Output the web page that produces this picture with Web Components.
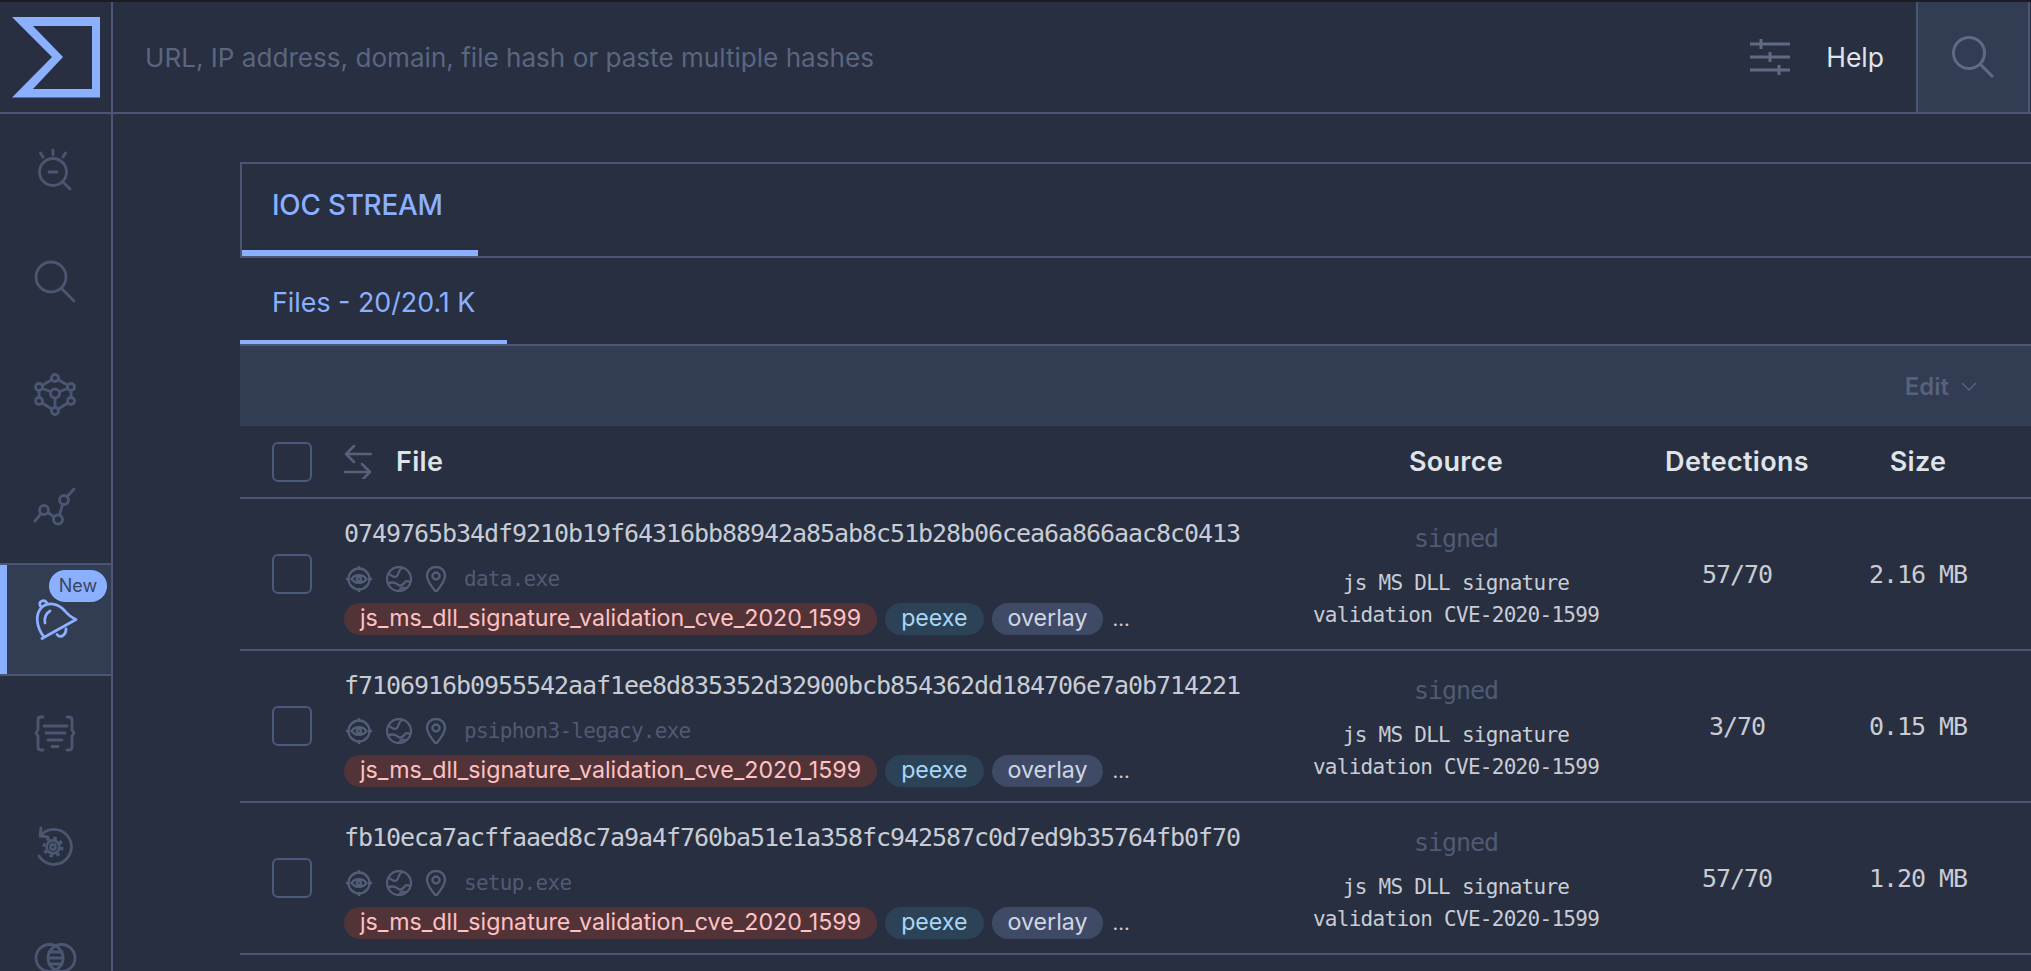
<!DOCTYPE html>
<html>
<head>
<meta charset="utf-8">
<title>IOC Stream</title>
<style>
  html, body { margin: 0; height: 100%; background: #282f40; overflow: hidden; }
  body { font-family: "Inter", "Liberation Sans", sans-serif; color: #dfe3ea; }
</style>
</head>
<body>
<vt-app>
  <vt-topbar slot="top"></vt-topbar>
  <vt-rail slot="rail">
    <rail-item icon="detect"></rail-item>
    <rail-item icon="search"></rail-item>
    <rail-item icon="graph"></rail-item>
    <rail-item icon="trend"></rail-item>
    <rail-item icon="bell" active badge="New"></rail-item>
    <rail-item icon="rules"></rail-item>
    <rail-item icon="retro"></rail-item>
    <rail-item icon="dna"></rail-item>
  </vt-rail>
  <ioc-panel>
    <file-row hash="0749765b34df9210b19f64316bb88942a85ab8c51b28b06cea6a866aac8c0413" name="data.exe" detections="57/70" size="2.16 MB"></file-row>
    <file-row hash="f7106916b0955542aaf1ee8d835352d32900bcb854362dd184706e7a0b714221" name="psiphon3-legacy.exe" detections="3/70" size="0.15 MB"></file-row>
    <file-row hash="fb10eca7acffaaed8c7a9a4f760ba51e1a358fc942587c0d7ed9b35764fb0f70" name="setup.exe" detections="57/70" size="1.20 MB"></file-row>
  </ioc-panel>
</vt-app>

<script>
// @ts-check
const ICONS = {
  detect: `<circle cx="28" cy="32" r="13.500"/><path d="M28 10v5M15.500 13l2.500 4M40.500 13l-2.500 4M24 32h8M38 42l7 7"/>`,
  search: `<circle cx="26" cy="24" r="15"/><path d="M37 36l12 12"/>`,
  graph: `<path d="M30 13l16 9v14l-16 10-16-10V22zM14 22l16 6.500 16-6.500M30 28.500V46"/><g fill="#282f40"><circle cx="30" cy="13" r="3.500"/><circle cx="46" cy="22" r="3.500"/><circle cx="46" cy="36" r="3.500"/><circle cx="30" cy="46" r="3.500"/><circle cx="14" cy="36" r="3.500"/><circle cx="14" cy="22" r="3.500"/><circle cx="30" cy="28.500" r="4.500"/></g>`,
  trend: `<path d="M10 43l9-11 14 9.500L39 22l10-11"/><g fill="#282f40"><circle cx="19" cy="32" r="4.500"/><circle cx="33" cy="41.500" r="4.500"/><circle cx="39" cy="22" r="4.500"/></g>`,
  bell: `<path d="M17 48.500L51 29.500M19 47C12 38 9 25 17 17 23 12 33 13 40 21 43 25 46 27 51 29.500M17 17c-3-1-3-5 0-6 3-1 5 1 5 3M32 44.500c3 4 9 1 9-5.500M25 21c-4 2-6 7-5 12"/>`,
  rules: `<path d="M18 14h-2q-3 0-3 3v10l-2 3 2 3v11q0 3 3 3h2M42 14h2q3 0 3 3v10l2 3-2 3v11q0 3-3 3h-2M19 23h23M21 30h19M23 37h14M27 43.500h6"/>`,
  retro: `<path d="M16 20A17.500 17.500 0 1 1 14 41M16 13l-1 8 8 1"/><circle cx="28" cy="32" r="2.500"/><circle cx="28" cy="32" r="6.500"/><circle cx="28" cy="32" r="9" stroke-width="3" stroke-dasharray="3.500 3.570" stroke-linecap="butt"/>`,
  dna: `<circle cx="24.500" cy="30" r="13.500"/><circle cx="36.500" cy="30" r="13.500"/><path d="M24 24h13M23 30h15M24 36h13"/>`,
};

const ROW_ICONS = {
  eye: `<circle cx="13" cy="13" r="10.500"/><path d="M13 0v3M13 23v3M0 13h3M23 13h3M5.500 13c3.500-5 11.500-5 15 0-3.500 5-11.500 5-15 0z"/><circle cx="13" cy="13" r="2"/>`,
  globe: `<circle cx="13" cy="13" r="12"/><path d="M3 8c3 1 5 5 8 2 2-2 1-6 5-8M2 17c5-1 7-1 9 1 3 3 6 1 8-2 1-1 3-1 5 0M14 24c0-2 2-3 6-2"/>`,
  pin: `<path d="M10 1C4 1 1 5.500 1 10c0 5 5 11 9 16 4-5 9-11 9-16 0-4.500-3-9-9-9z"/><circle cx="10" cy="10" r="3.500"/>`,
};

class VtApp extends HTMLElement {
  constructor() {
    super();
    this.attachShadow({ mode: 'open' }).innerHTML = `
      <style>
        :host { display: grid; grid-template-rows: 114px 1fr; grid-template-columns: 113px 1fr; height: 971px; width: 2031px; overflow: hidden; }
        ::slotted([slot="top"]) { grid-column: 1 / -1; }
        main { padding: 48px 0 0 127px; min-width: 0; overflow: hidden; }
      </style>
      <slot name="top"></slot>
      <slot name="rail"></slot>
      <main><slot></slot></main>`;
  }
}

class VtTopbar extends HTMLElement {
  constructor() {
    super();
    this.attachShadow({ mode: 'open' }).innerHTML = `
      <style>
        :host { display: flex; box-sizing: border-box; height: 114px; border-top: 2px solid #1c1d22; border-bottom: 2px solid #4a5673; align-items: stretch; padding-right: 1px; }
        .logo { width: 111px; flex: none; border-right: 2px solid #4a5673; }
        .logo svg { display: block; }
        .query { flex: 1; padding-left: 32px; align-self: center; font-size: 26.100px; color: #5a6680; }
        .filters { align-self: center; display: block; margin-right: 36px; }
        .help { align-self: center; font-size: 26.500px; color: #dfe3ea; margin-right: 32px; }
        .go { width: 110px; flex: none; background: #323c52; border-left: 2px solid #4a5673; border-right: 2px solid #4a5673; display: flex; align-items: center; justify-content: center; }
      </style>
      <div class="logo">
        <svg width="111" height="110" viewBox="0 2 111 110"><path fill="#8ab0ff" fill-rule="evenodd" d="M12 17H100V97.500H12L52 57zM33 26L63 57 33 89H92V26z"/></svg>
      </div>
      <div class="query">URL, IP address, domain, file hash or paste multiple hashes</div>
      <svg class="filters" width="40" height="36" viewBox="0 0 40 36" fill="none" stroke="#5f6b85" stroke-width="3"><path d="M0 5h40M0 18h40M0 31h40M11 0v10M20 13v10M29 26v10"/></svg>
      <div class="help">Help</div>
      <div class="go">
        <svg width="44" height="44" viewBox="0 0 44 44" fill="none" stroke="#5f6b85" stroke-width="3"><circle cx="18" cy="18" r="15.500"/><path d="M29 29l13 13"/></svg>
      </div>`;
  }
}

class VtRail extends HTMLElement {
  constructor() {
    super();
    this.attachShadow({ mode: 'open' }).innerHTML = `
      <style>
        :host { display: flex; flex-direction: column; width: 113px; box-sizing: border-box; border-right: 2px solid #4a5673; overflow: hidden; height: 857px; }
      </style>
      <slot></slot>`;
  }
}

class RailItem extends HTMLElement {
  connectedCallback() {
    if (this.shadowRoot) {
      return;
    }
    const badge = this.getAttribute('badge');
    this.attachShadow({ mode: 'open' }).innerHTML = `
      <style>
        :host { display: block; position: relative; flex: 0 0 112.500px; height: 112.500px; box-sizing: border-box; }
        :host([active]) { background: #323c52; border-top: 2px solid #4a5673; border-bottom: 2px solid #4a5673; margin-top: -1px; margin-bottom: 1px; }
        :host([active])::before { content: ""; position: absolute; left: 0; top: 0; bottom: 0; width: 7px; background: #8ab0ff; }
        svg { position: absolute; left: 25px; top: calc(50% - 30px); fill: none; stroke: #4b5772; stroke-width: 2.800; stroke-linecap: round; stroke-linejoin: round; }
        :host([active]) svg { stroke: #8ab0ff; top: calc(50% - 29px); }
        .badge { position: absolute; left: 49px; top: 5px; width: 58px; height: 32px; border-radius: 16px; background: #8ab0ff; color: #3a4560; font-size: 18px; line-height: 32px; text-align: center; }
      </style>
      <svg width="60" height="60" viewBox="0 0 60 60">${ICONS[this.getAttribute('icon') || 'search']}</svg>
      ${badge ? `<span class="badge">${badge}</span>` : ''}`;
  }
}

class IocPanel extends HTMLElement {
  constructor() {
    super();
    this.attachShadow({ mode: 'open' }).innerHTML = `
      <style>
        :host { display: block; width: 1900px; }
        .tab-row { height: 94px; box-sizing: border-box; border-top: 2px solid #4a5673; border-left: 2px solid #4a5673; }
        .tab-row span { display: flex; box-sizing: border-box; align-items: center; width: 236px; height: 92px; padding: 0 0 5px 30px; border-bottom: 6px solid #8ab0ff; font-size: 27.800px; font-weight: 500; color: #8ab0ff; letter-spacing: -0.200px; }
        .sub-row { height: 88px; box-sizing: border-box; border-top: 2px solid #4a5673; }
        .sub-row span { display: flex; box-sizing: border-box; align-items: center; width: 267px; height: 86px; padding: 5px 0 0 32px; border-bottom: 4px solid #8ab0ff; font-size: 26.800px; color: #8ab0ff; }
        .tools { height: 82px; box-sizing: border-box; background: #323c52; border-top: 2px solid #4a5673; display: flex; align-items: center; justify-content: flex-end; width: 1791px; padding-right: 54px; gap: 12px; font-size: 24px; font-weight: 600; color: #56627c; }
        .head { display: grid; grid-template-columns: 104px 936px 352px 210px 152px 1fr; height: 71px; align-items: center; border-bottom: 2px solid #4a5673; font-size: 27px; font-weight: 600; color: #dfe3ea; letter-spacing: 0.300px; }
        .head > span { text-align: center; }
        .file { display: flex; align-items: center; gap: 24px; }
        .check { width: 36px; height: 36px; margin-left: 32px; border: 2px solid #4a5a7f; border-radius: 6px; }
        svg { display: block; }
      </style>
      <div class="tab-row"><span>IOC STREAM</span></div>
      <div class="sub-row"><span>Files - 20/20.1 K</span></div>
      <div class="tools">Edit
        <svg width="16" height="9" viewBox="0 0 16 9" fill="none" stroke="#56627c" stroke-width="1.500"><path d="M1 1l7 7 7-7"/></svg>
      </div>
      <div class="head">
        <div class="check"></div>
        <div class="file">
          <svg width="28" height="34" viewBox="0 0 28 34" fill="none" stroke="#56627c" stroke-width="2.500" stroke-linecap="round" stroke-linejoin="round"><path d="M27 9H2M10 1L2 9l8 8M1 27h25M18 19l8 8-8 8"/></svg>
          <span>File</span>
        </div>
        <span>Source</span><span>Detections</span><span>Size</span>
      </div>
      <slot></slot>`;
  }
}

class TagPill extends HTMLElement {
  constructor() {
    super();
    this.attachShadow({ mode: 'open' }).innerHTML = `
      <style>
        :host { display: inline-block; height: 32px; line-height: 31px; padding: 0 16px; border-radius: 16px; font-size: 23.200px; white-space: nowrap; background: var(--pill-bg); color: var(--pill-fg); }
      </style>
      <slot></slot>`;
  }
}

class FileRow extends HTMLElement {
  connectedCallback() {
    if (this.shadowRoot) {
      return;
    }
    const icon = (name, width) => `<svg width="${width}" height="26" viewBox="0 0 ${width} 26" fill="none" stroke="#525e78" stroke-width="2.300" stroke-linecap="round" stroke-linejoin="round">${ROW_ICONS[name]}</svg>`;
    this.attachShadow({ mode: 'open' }).innerHTML = `
      <style>
        :host { display: grid; grid-template-columns: 104px 936px 352px 210px 152px 1fr; height: 152px; box-sizing: border-box; border-bottom: 2px solid #4a5673; align-items: center; font-family: "DejaVu Sans Mono", monospace; color: #c8ccd5; }
        .check { width: 36px; height: 36px; margin-left: 32px; border: 2px solid #4a5a7f; border-radius: 6px; }
        .file { display: flex; flex-direction: column; padding-top: 8px; }
        .hash { font-size: 25px; letter-spacing: -1.050px; line-height: 30px; height: 30px; margin-top: -3px; margin-bottom: 17px; }
        .meta { display: flex; align-items: center; gap: 14px; height: 26px; margin-left: 2px; font-size: 21px; letter-spacing: -0.720px; color: #4f5b75; margin-bottom: 11px; }
        .name { margin-left: 4px; }
        .tags { display: flex; align-items: center; gap: 8px; font-family: "Inter", sans-serif; letter-spacing: 0; }
        .more { font-size: 20px; margin-left: 1px; }
        .red { --pill-bg: #523438; --pill-fg: #ffc1c4; }
        .blue { --pill-bg: #2b4257; --pill-fg: #a9d6f5; }
        .grey { --pill-bg: #3f4b66; --pill-fg: #cfd6e2; }
        .source { text-align: center; font-size: 21px; letter-spacing: -0.720px; line-height: 32px; padding-top: 7px; }
        .signed { display: block; font-size: 25px; letter-spacing: -1.050px; color: #4f5b75; line-height: 30px; margin-bottom: 13px; }
        .num { text-align: center; font-size: 25px; letter-spacing: -1.050px; padding-top: 1px; }
      </style>
      <div class="check"></div>
      <div class="file">
        <div class="hash">${this.getAttribute('hash')}</div>
        <div class="meta">${icon('eye', 26)}${icon('globe', 26)}${icon('pin', 20)}<span class="name">${this.getAttribute('name')}</span></div>
        <div class="tags">
          <tag-pill class="red">js_ms_dll_signature_validation_cve_2020_1599</tag-pill>
          <tag-pill class="blue">peexe</tag-pill>
          <tag-pill class="grey">overlay</tag-pill>
          <span class="more">...</span>
        </div>
      </div>
      <div class="source"><span class="signed">signed</span>js MS DLL signature<br>validation CVE-2020-1599</div>
      <div class="num">${this.getAttribute('detections')}</div>
      <div class="num">${this.getAttribute('size')}</div>`;
  }
}

customElements.define('vt-app', VtApp);
customElements.define('vt-topbar', VtTopbar);
customElements.define('vt-rail', VtRail);
customElements.define('rail-item', RailItem);
customElements.define('ioc-panel', IocPanel);
customElements.define('tag-pill', TagPill);
customElements.define('file-row', FileRow);
</script>
</body>
</html>
